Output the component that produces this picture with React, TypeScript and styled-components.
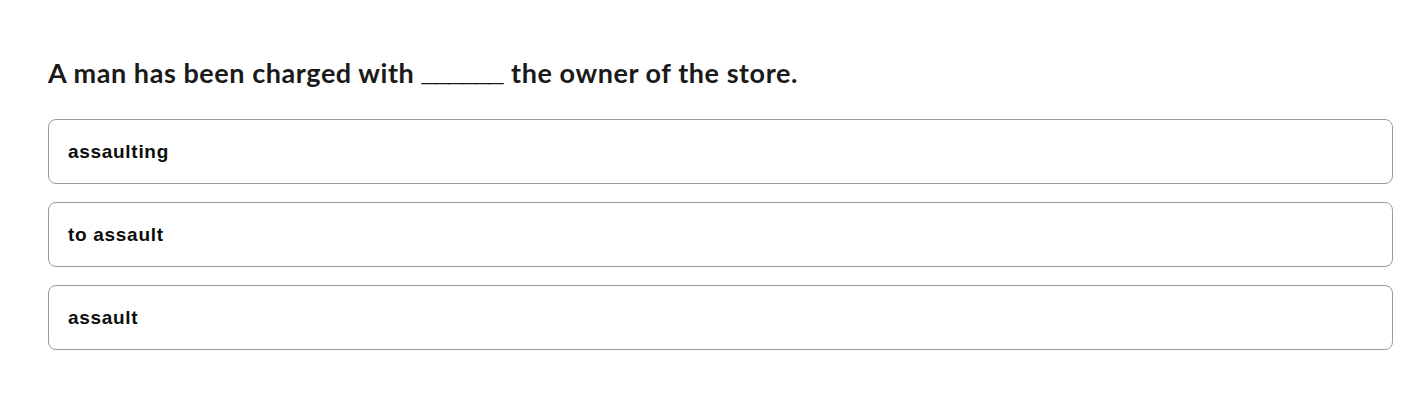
import React from "react";
import styled, { createGlobalStyle } from "styled-components";

const Global = createGlobalStyle`
  html, body { margin: 0; padding: 0; background: #ffffff; }
  body { font-family: "Liberation Sans", Arial, sans-serif; }
`;

const Page = styled.main`
  padding: 57px 28px 40px 48px;
`;

const Question = styled.h2`
  margin: 0 0 30px 0;
  font-family: "Lato", "Liberation Sans", sans-serif;
  font-weight: 700;
  font-size: 27px;
  line-height: 32px;
  letter-spacing: 0.56px;
  color: #1a1a1a;
`;

const Blank = styled.span`
  font-family: "Liberation Sans", Arial, sans-serif;
  font-size: 27px;
  line-height: 1;
  letter-spacing: -1.6px;
  position: relative;
  top: -2px;
  margin-right: 2px;
`;

const Options = styled.div`
  display: flex;
  flex-direction: column;
  gap: 18px;
`;

const Option = styled.button`
  display: flex;
  align-items: center;
  box-sizing: border-box;
  width: 100%;
  height: 65px;
  padding: 0 19px;
  background: #ffffff;
  border: 1px solid #9a9a9a;
  border-radius: 8px;
  font-family: "Liberation Sans", Arial, sans-serif;
  font-weight: 700;
  font-size: 19px;
  letter-spacing: 0.7px;
  color: #0d0d0d;
  text-align: left;
  cursor: pointer;
`;

const options = ["assaulting", "to assault", "assault"];

export default function App() {
  return (
    <>
      <Global />
      <Page>
        <Question>
          A man has been charged with <Blank>______</Blank> the owner of the store.
        </Question>
        <Options>
          {options.map((o) => (
            <Option key={o}>{o}</Option>
          ))}
        </Options>
      </Page>
    </>
  );
}
